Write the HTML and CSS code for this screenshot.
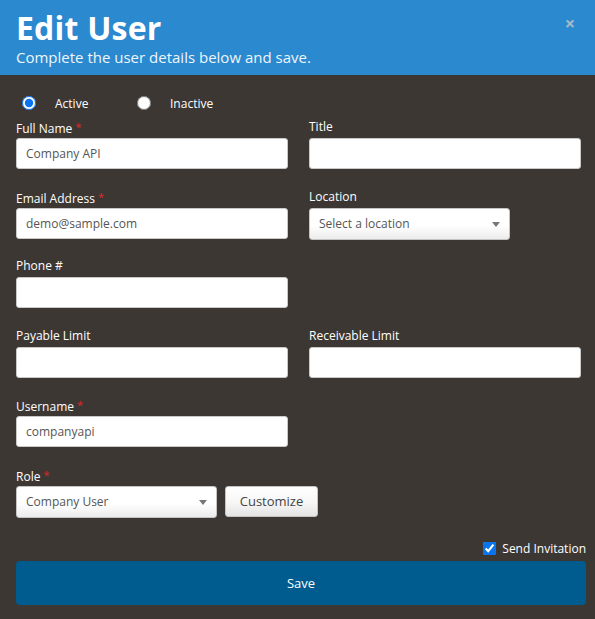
FILE: index.html
```html
<!DOCTYPE html>
<html>
<head>
<meta charset="utf-8">
<link rel="stylesheet" href="styles.css">
</head>
<body>
<div class="modal">
  <header class="head">
    <div class="head-text">
      <h1 class="title">Edit User</h1>
      <p class="subtitle">Complete the user details below and save.</p>
    </div>
    <span class="close">&times;</span>
  </header>
  <form class="body">
    <div class="status">
      <label class="radio"><input type="radio" name="status" checked><span>Active</span></label>
      <label class="radio"><input type="radio" name="status"><span>Inactive</span></label>
    </div>
    <div class="grid">
      <div class="field">
        <label class="lbl">Full Name <span class="req">*</span></label>
        <div class="input">Company API</div>
      </div>
      <div class="field">
        <label class="lbl">Title</label>
        <div class="input"></div>
      </div>
      <div class="field">
        <label class="lbl">Email Address <span class="req">*</span></label>
        <div class="input">demo@sample.com</div>
      </div>
      <div class="field">
        <label class="lbl">Location</label>
        <div class="select">Select a location<span class="caret"></span></div>
      </div>
      <div class="field">
        <label class="lbl">Phone #</label>
        <div class="input"></div>
      </div>
      <div class="field"></div>
      <div class="field">
        <label class="lbl">Payable Limit</label>
        <div class="input"></div>
      </div>
      <div class="field">
        <label class="lbl">Receivable Limit</label>
        <div class="input"></div>
      </div>
      <div class="field">
        <label class="lbl">Username <span class="req">*</span></label>
        <div class="input">companyapi</div>
      </div>
      <div class="field"></div>
      <div class="field wide">
        <label class="lbl">Role <span class="req">*</span></label>
        <div class="role-row">
          <div class="select">Company User<span class="caret"></span></div>
          <button type="button" class="btn">Customize</button>
        </div>
      </div>
    </div>
    <div class="invite">
      <label class="check"><input type="checkbox" checked><span>Send Invitation</span></label>
    </div>
    <button type="button" class="save">Save</button>
  </form>
</div>
</body>
</html>
```
FILE: styles.css
```css
* { box-sizing: border-box; }
html, body { margin: 0; padding: 0; }
body {
  width: 595px;
  height: 619px;
  background: #3d3733;
  font-family: "Open Sans", "Liberation Sans", sans-serif;
  overflow: hidden;
}
.modal { width: 595px; height: 619px; background: #3d3733; }
.head {
  background: #2b89cf;
  height: 75px;
  display: flex;
  justify-content: space-between;
  align-items: flex-start;
  padding: 8px 20px 0 16px;
  color: #fff;
}
.title {
  margin: 0;
  font-size: 32px;
  font-weight: 700;
  line-height: 40px;
  letter-spacing: 0.2px;
}
.subtitle {
  margin: 0;
  font-size: 15px;
  line-height: 18px;
  color: #eef5fb;
}
.close {
  color: #a9b8c6;
  font-size: 18px;
  font-weight: 700;
  line-height: 18px;
  margin-top: 6px;
}
.body { padding: 12px 9px 0 16px; }
.status { display: flex; height: 32px; align-items: center; }
.radio {
  display: flex;
  align-items: center;
  color: #fff;
  font-size: 12px;
  width: 115px;
}
.radio input {
  width: 14px; height: 14px;
  margin: 0 19px 0 6px;
  accent-color: #0a74f0;
}
.grid {
  display: grid;
  grid-template-columns: 272px 272px;
  column-gap: 21px;
}
.field { height: 69.6px; }
.wide { grid-column: 1 / 3; }
.lbl {
  display: block;
  color: #fff;
  font-size: 12px;
  line-height: 16px;
  height: 16px;
  margin-bottom: 3px;
}
.req { color: #e0262c; font-size: 11px; vertical-align: 2px; }
.input {
  height: 31px;
  background: #fff;
  border: 1px solid #c9c9c9;
  border-radius: 3px;
  font-size: 12px;
  color: #555;
  padding: 0 9px;
  line-height: 29px;
}
.select {
  position: relative;
  width: 201px;
  height: 32px;
  background: linear-gradient(#ffffff 0%, #ffffff 55%, #ececec 100%);
  border: 1px solid #c4c4c4;
  border-radius: 3px;
  font-size: 12px;
  color: #555;
  padding: 0 9px;
  line-height: 30px;
}
.caret {
  position: absolute;
  right: 9px;
  top: 13px;
  width: 0; height: 0;
  border-left: 4.5px solid transparent;
  border-right: 4.5px solid transparent;
  border-top: 5px solid #777;
}
.role-row { display: flex; gap: 8px; }
.btn {
  width: 93px;
  height: 31px;
  background: linear-gradient(#ffffff 0%, #f6f6f6 55%, #e4e4e4 100%);
  border: 1px solid #c4c4c4;
  border-radius: 3px;
  font-family: inherit;
  font-size: 13px;
  color: #444;
  padding: 0;
}
.invite {
  display: flex;
  justify-content: flex-end;
  height: 24px;
  align-items: flex-end;
  padding-bottom: 4px;
}
.check {
  display: flex;
  align-items: center;
  color: #fff;
  font-size: 12px;
}
.check input {
  width: 13px; height: 13px;
  margin: 0 6px 0 0;
  accent-color: #0a74f0;
}
.save {
  display: block;
  width: 570px;
  height: 44px;
  background: #005b8f;
  border: none;
  border-radius: 4px;
  color: #fff;
  font-family: inherit;
  font-size: 13px;
}
```
